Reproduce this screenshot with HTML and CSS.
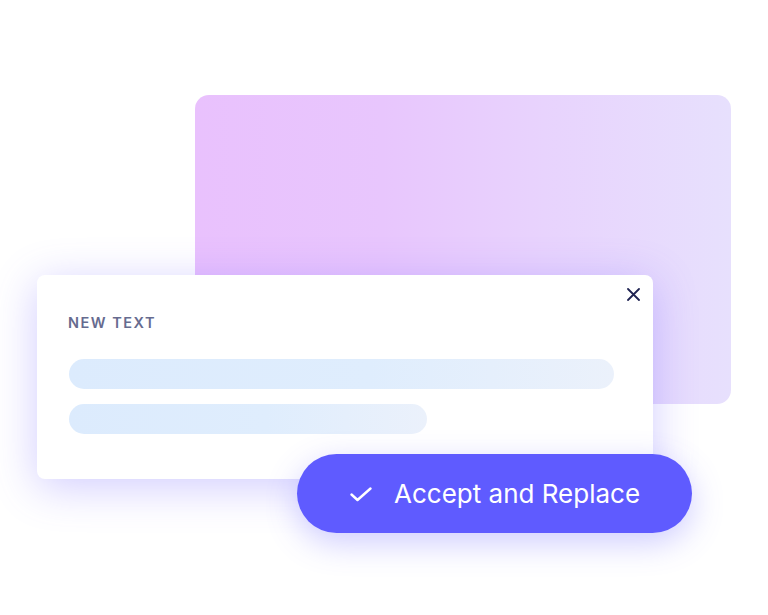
FILE: index.html
```html
<!DOCTYPE html>
<html>
<head>
<meta charset="utf-8">
<link rel="stylesheet" href="styles.css">
</head>
<body>
<div class="stage">
  <div class="back-card"></div>
  <div class="text-card">
    <svg class="close" width="13" height="13" viewBox="0 0 13 13"><path d="M1 1L12 12M12 1L1 12" stroke="#1f2352" stroke-width="1.8" stroke-linecap="round" fill="none"/></svg>
    <div class="label">NEW TEXT</div>
    <div class="bars">
      <div class="bar bar-long"></div>
      <div class="bar bar-short"></div>
    </div>
  </div>
  <div class="accept-btn">
    <svg class="check" width="22" height="15" viewBox="0 0 22 15"><path d="M1.5 7.5L7.5 13L20.5 1.5" stroke="#ffffff" stroke-width="2.4" stroke-linecap="round" stroke-linejoin="round" fill="none"/></svg>
    <span class="btn-text">Accept and Replace</span>
  </div>
</div>
</body>
</html>
```
FILE: styles.css
```css
html, body {
  margin: 0;
  padding: 0;
  background: #ffffff;
}
.stage {
  position: relative;
  width: 768px;
  height: 615px;
  overflow: hidden;
  font-family: Inter, "Liberation Sans", sans-serif;
}
.back-card {
  margin-left: 195px;
  margin-top: 95px;
  width: 536px;
  height: 309px;
  border-radius: 14px;
  background: linear-gradient(90deg, #e9c1fd 0%, #e8c6fd 35%, #e8d3fd 65%, #e7e0fd 100%);
}
.text-card {
  position: absolute;
  left: 37px;
  top: 275px;
  width: 616px;
  height: 204px;
  box-sizing: border-box;
  padding: 39px 39px 0 31px;
  background: #ffffff;
  border-radius: 8px;
  box-shadow: 0 8px 44px rgba(112, 96, 255, 0.32);
  display: flex;
  flex-direction: column;
}
.close {
  position: absolute;
  right: 13px;
  top: 13px;
}
.label {
  font-size: 14.5px;
  line-height: 18px;
  font-weight: 600;
  letter-spacing: 1.5px;
  color: #666b8f;
}
.bars {
  margin-top: 27px;
  margin-left: 1px;
  display: flex;
  flex-direction: column;
  gap: 15px;
}
.bar {
  height: 30px;
  border-radius: 15px;
  background: linear-gradient(90deg, #dcebfd 0%, #dfedfd 55%, #ebf1fb 100%);
}
.bar-long { width: 545px; }
.bar-short { width: 358px; }
.accept-btn {
  position: absolute;
  left: 297px;
  top: 454px;
  width: 395px;
  height: 79px;
  box-sizing: border-box;
  padding-left: 53px;
  border-radius: 40px;
  background: #5f5bff;
  box-shadow: 0 10px 32px rgba(95, 91, 255, 0.3);
  display: flex;
  align-items: center;
  gap: 22px;
}
.check { display: block; margin-top: 1px; }
.btn-text {
  color: #ffffff;
  font-size: 26px;
  font-weight: 400;
  letter-spacing: 0;
  line-height: 30px;
}
```
